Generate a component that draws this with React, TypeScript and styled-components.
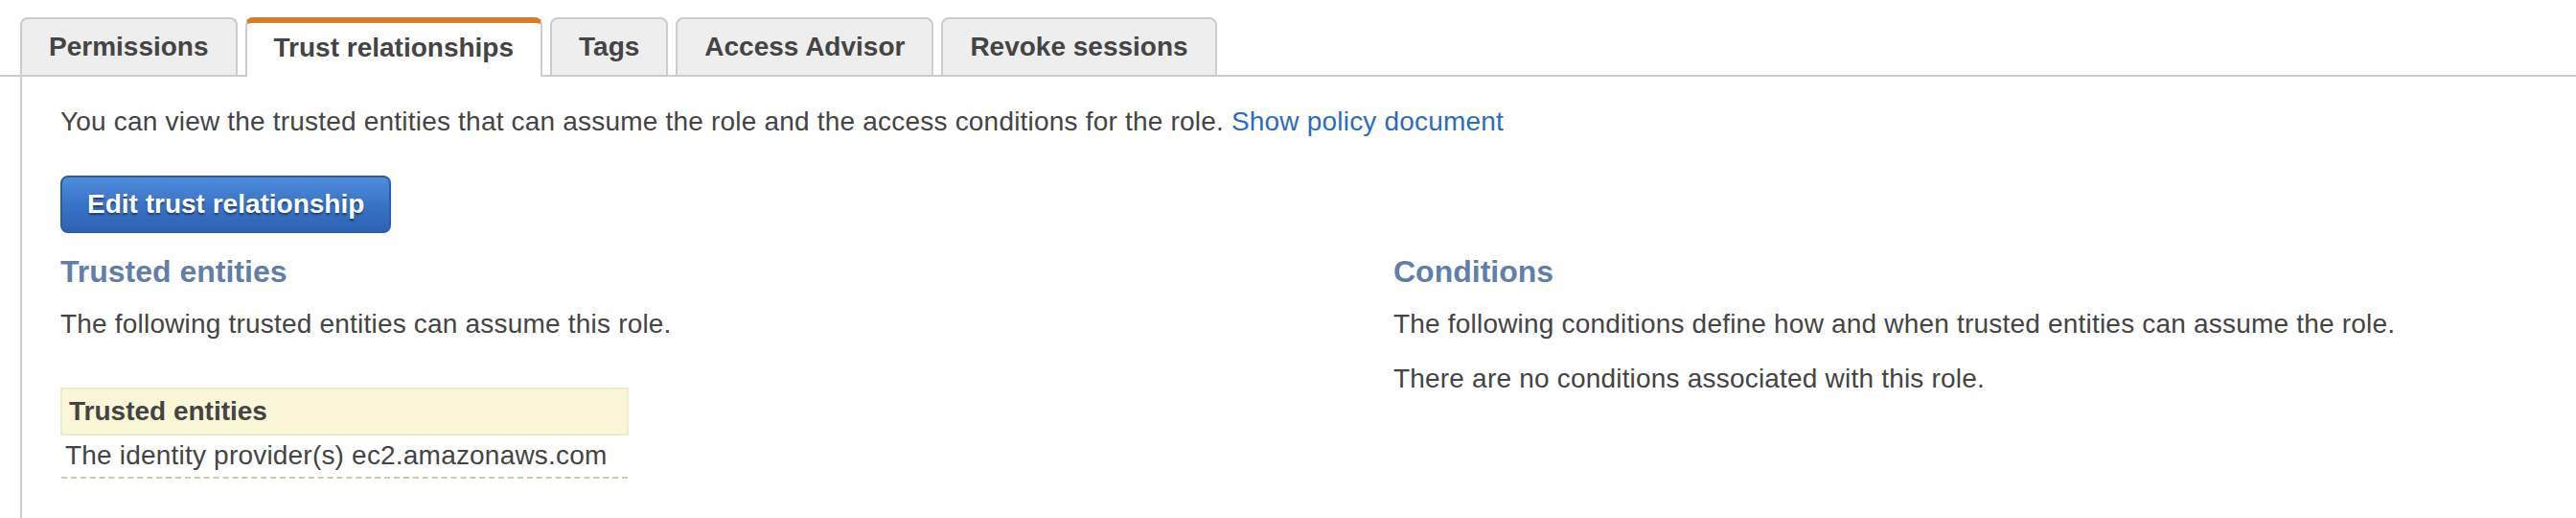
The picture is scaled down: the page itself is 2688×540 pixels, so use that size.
import React from 'react';
import styled, { createGlobalStyle, css } from 'styled-components';

const GlobalStyle = createGlobalStyle`
  html, body {
    margin: 0;
    padding: 0;
    background: #fff;
  }
  body {
    font-family: "Liberation Sans", Helvetica, Arial, sans-serif;
    color: #444;
  }
`;

const Page = styled.div`
  padding-top: 18px;
`;

const TabBar = styled.div`
  display: flex;
  align-items: flex-end;
  gap: 8px;
  padding-left: 21px;
  border-bottom: 2px solid #ccc;
`;

const Tab = styled.div<{ $active?: boolean }>`
  box-sizing: border-box;
  display: flex;
  align-items: center;
  height: 60px;
  padding: 0 28px;
  border: 2px solid #ccc;
  border-bottom: none;
  border-radius: 8px 8px 0 0;
  background: #eee;
  color: #444;
  font-size: 28px;
  font-weight: bold;
  white-space: nowrap;
  cursor: pointer;

  ${props => props.$active && css`
    height: 62px;
    margin-bottom: -2px;
    padding-bottom: 4px;
    border-top: 6px solid #d67b2c;
    background: #fff;
  `}
`;

const Panel = styled.div`
  margin-left: 21px;
  min-height: 460px;
  box-sizing: border-box;
  border-left: 2px solid #ccc;
  padding: 27px 40px 0 40px;
`;

const Intro = styled.p`
  margin: 0;
  font-size: 28px;
  line-height: 40px;
  letter-spacing: 0.2px;
  color: #444;
`;

const Link = styled.a`
  color: #2b6cc0;
  text-decoration: none;
  cursor: pointer;
`;

const EditButton = styled.button`
  box-sizing: border-box;
  display: block;
  margin-top: 36px;
  height: 60px;
  padding: 0 26px;
  border: 2px solid #2a5dab;
  border-radius: 8px;
  background: linear-gradient(to bottom, #4f8cdb 0%, #3a74c8 50%, #2c63b4 100%);
  color: #fff;
  font-family: inherit;
  font-size: 28px;
  font-weight: bold;
  text-shadow: 0 2px 2px rgba(0, 0, 0, 0.45);
  cursor: pointer;
`;

const Columns = styled.div`
  display: grid;
  grid-template-columns: 1391px 1fr;
  margin-top: 20px;
`;

const Heading = styled.h2`
  margin: 0;
  font-size: 32px;
  line-height: 40px;
  font-weight: bold;
  color: #5f7faa;
`;

const Text = styled.p<{ $gap?: number }>`
  margin: ${props => props.$gap ?? 15}px 0 0;
  font-size: 28px;
  line-height: 40px;
  letter-spacing: 0.2px;
  color: #444;
`;

const EntityTable = styled.table`
  margin-top: 46px;
  width: 593px;
  border-collapse: collapse;
  font-size: 28px;
  color: #444;
`;

const HeadCell = styled.th`
  box-sizing: border-box;
  height: 48px;
  padding: 0 7px;
  border: 2px solid #efebc6;
  background: #faf7d9;
  text-align: left;
  font-weight: bold;
`;

const Cell = styled.td`
  padding: 3px 4px 4px;
  line-height: 36px;
  letter-spacing: 0.2px;
  border-bottom: 2px dashed #cfcb9c;
`;

const tabs = ['Permissions', 'Trust relationships', 'Tags', 'Access Advisor', 'Revoke sessions'];

const App: React.FC = () => {
  return (
    <Page>
      <GlobalStyle />
      <TabBar>
        {tabs.map(tab => (
          <Tab key={tab} $active={tab === 'Trust relationships'}>{tab}</Tab>
        ))}
      </TabBar>

      <Panel>
        <Intro>
          You can view the trusted entities that can assume the role and the access conditions for the role.{' '}
          <Link>Show policy document</Link>
        </Intro>

        <EditButton>Edit trust relationship</EditButton>

        <Columns>
          <div>
            <Heading>Trusted entities</Heading>
            <Text>The following trusted entities can assume this role.</Text>
            <EntityTable>
              <thead>
                <tr>
                  <HeadCell>Trusted entities</HeadCell>
                </tr>
              </thead>
              <tbody>
                <tr>
                  <Cell>The identity provider(s) ec2.amazonaws.com</Cell>
                </tr>
              </tbody>
            </EntityTable>
          </div>

          <div>
            <Heading>Conditions</Heading>
            <Text>The following conditions define how and when trusted entities can assume the role.</Text>
            <Text $gap={17}>There are no conditions associated with this role.</Text>
          </div>
        </Columns>
      </Panel>
    </Page>
  );
};

export default App;
